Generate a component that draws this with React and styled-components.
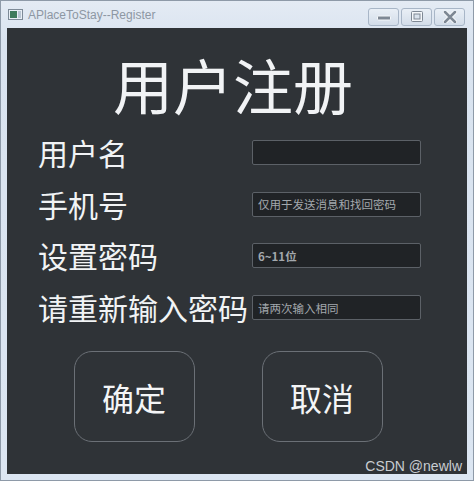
import React from "react";
import styled, { createGlobalStyle } from "styled-components";

const GlobalStyle = createGlobalStyle`
  html, body {
    margin: 0;
    padding: 0;
    background: #dfe8f3;
  }
  * {
    box-sizing: border-box;
  }
`;

const Window = styled.div`
  width: 474px;
  height: 481px;
  display: flex;
  flex-direction: column;
  background: linear-gradient(#e4ebf4, #d9e3ef 40px, #dce6f2);
  border: 1px solid #8e9aa8;
  position: relative;
`;

const TitleBar = styled.div`
  height: 27px;
  display: flex;
  align-items: center;
  padding: 0 7px 0 7px;
`;

const TitleText = styled.span`
  margin-left: 5px;
  font-family: "Liberation Sans", "Noto Sans", sans-serif;
  font-size: 12px;
  color: #8d97a3;
  flex: 1;
`;

const Controls = styled.div`
  display: flex;
  gap: 2px;
  margin-top: 4px;
  margin-right: 1px;
`;

const CtrlButton = styled.div`
  width: 31px;
  height: 18px;
  border: 1px solid #a8b6c7;
  border-radius: 3px;
  background: linear-gradient(#e9eff6, #d3dde9);
  display: flex;
  align-items: center;
  justify-content: center;
`;

const Panel = styled.div`
  margin: 0 6px 6px 6px;
  flex: 1;
  background: #2f3337;
  display: flex;
  flex-direction: column;
  align-items: center;
  position: relative;
`;

const Heading = styled.h1`
  margin: 21px 0 0 -8px;
  font-family: "Noto Sans CJK SC", sans-serif;
  font-weight: 400;
  font-size: 60px;
  line-height: 70px;
  color: #f1f3f5;
`;

const Form = styled.div`
  align-self: stretch;
  display: grid;
  grid-template-columns: 1fr 169px;
  row-gap: 26.7px;
  padding: 21px 46px 0 31px;
  align-items: center;
`;

const Label = styled.label`
  font-family: "Noto Sans CJK SC", sans-serif;
  font-size: 30px;
  line-height: 25px;
  color: #f1f3f5;
  padding-top: 6px;
  margin-top: -6px;
  white-space: nowrap;
`;

const Input = styled.input`
  width: 169px;
  height: 25px;
  background: #202326;
  border: 1px solid #5c6167;
  border-radius: 2px;
  padding: 0 5px;
  font-family: "Noto Sans CJK SC", sans-serif;
  font-size: 11.5px;
  color: #e0e3e6;
  outline: none;

  &::placeholder {
    color: #a3a8ad;
    font-weight: ${(p) => (p.$bold ? 700 : 400)};
  }
`;

const Actions = styled.div`
  display: flex;
  gap: 67px;
  margin-top: 31px;
  margin-left: -18px;
`;

const Action = styled.button`
  width: 121px;
  height: 91px;
  border: 1px solid #6b7076;
  border-radius: 18px;
  background: transparent;
  font-family: "Noto Sans CJK SC", sans-serif;
  font-size: 32px;
  color: #f4f5f6;
  cursor: pointer;
`;

const Watermark = styled.span`
  position: absolute;
  right: 5px;
  bottom: 0;
  font-family: "Liberation Sans", Arial, sans-serif;
  font-size: 14px;
  color: #c9cdd2;
`;

const AppIcon = () => (
  <svg width="15" height="11" viewBox="0 0 15 11">
    <rect x="0.5" y="0.5" width="14" height="10" fill="#e8eef5" stroke="#7d8a97" />
    <rect x="2" y="2" width="7" height="7" fill="#3f7c5c" />
    <rect x="10" y="2" width="3" height="7" fill="#b9c6d3" />
  </svg>
);

const MinIcon = () => (
  <svg width="14" height="8" viewBox="0 0 14 8">
    <rect x="0.5" y="3" width="13" height="4" rx="1" fill="#7e8894" stroke="#f4f7fa" strokeWidth="1" />
  </svg>
);

const MaxIcon = () => (
  <svg width="12" height="11" viewBox="0 0 12 11">
    <rect x="0.5" y="0.5" width="11" height="10" rx="1" fill="#f4f7fa" stroke="#7e8894" />
    <rect x="3" y="3" width="6" height="5" fill="#d9e2ec" stroke="#7e8894" />
  </svg>
);

const CloseIcon = () => (
  <svg width="14" height="12" viewBox="0 0 14 12">
    <path d="M2 1 L12 11 M12 1 L2 11" stroke="#f6f8fa" strokeWidth="4.5" strokeLinecap="round" />
    <path d="M2 1 L12 11 M12 1 L2 11" stroke="#7e8894" strokeWidth="2.5" strokeLinecap="round" />
  </svg>
);

const fields = [
  { label: "用户名", placeholder: "" },
  { label: "手机号", placeholder: "仅用于发送消息和找回密码" },
  { label: "设置密码", placeholder: "6~11位", bold: true },
  { label: "请重新输入密码", placeholder: "请两次输入相同" },
];

const App = () => {
  return (
    <>
      <GlobalStyle />
      <Window>
        <TitleBar>
          <AppIcon />
          <TitleText>APlaceToStay--Register</TitleText>
          <Controls>
            <CtrlButton>
              <MinIcon />
            </CtrlButton>
            <CtrlButton>
              <MaxIcon />
            </CtrlButton>
            <CtrlButton>
              <CloseIcon />
            </CtrlButton>
          </Controls>
        </TitleBar>
        <Panel>
          <Heading>用户注册</Heading>
          <Form>
            {fields.map((f) => (
              <React.Fragment key={f.label}>
                <Label>{f.label}</Label>
                <Input placeholder={f.placeholder} $bold={f.bold} />
              </React.Fragment>
            ))}
          </Form>
          <Actions>
            <Action>确定</Action>
            <Action>取消</Action>
          </Actions>
          <Watermark>CSDN @newlw</Watermark>
        </Panel>
      </Window>
    </>
  );
};

export default App;
